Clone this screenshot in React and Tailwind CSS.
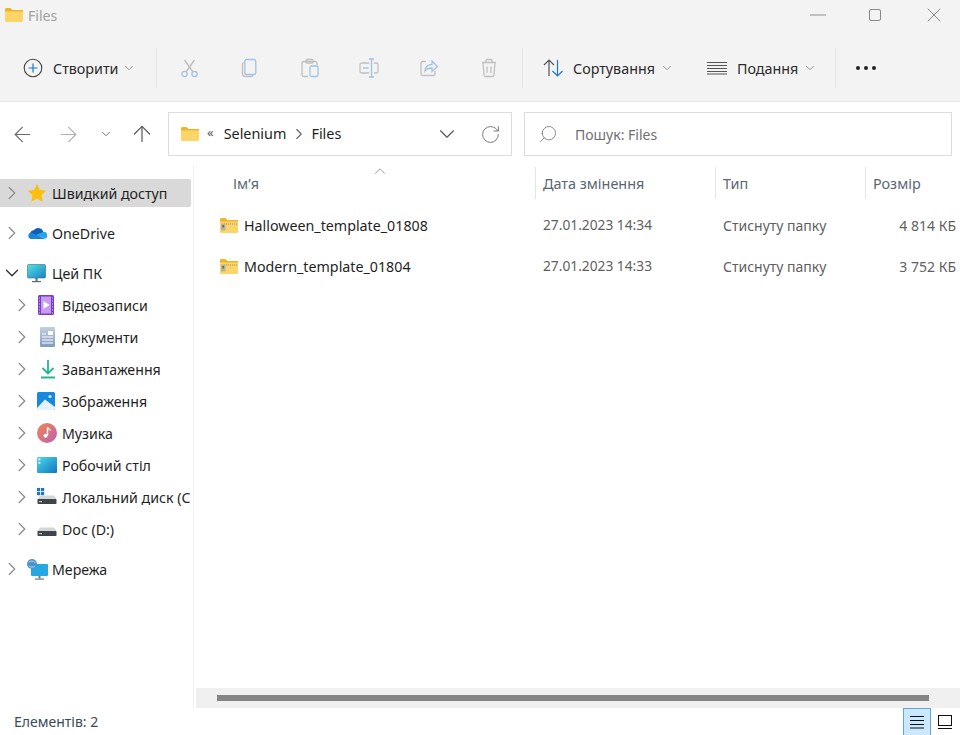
import { ChevronDown, ChevronRight, ChevronUp, ArrowLeft, ArrowRight, ArrowUp, RotateCw, Search, Minus, X } from 'lucide-react';

const Folder = ({ className }) => (
  <svg viewBox="0 0 18 14" className={className}>
    <path d="M0 1.5C0 .7.5 0 1.3 0h4.2l2 2H18v2H0z" fill="#f0b429" />
    <path d="M0 3.5h18v9.300c0 .7-.5 1.200-1.200 1.200H1.200C.5 14 0 13.500 0 12.800z" fill="#fbd568" />
  </svg>
);

const ZipFolder = () => (
  <svg viewBox="0 0 18 15" className="w-[18px] h-[15px] shrink-0">
    <path d="M0 1.500C0 .7.5 0 1.300 0h4.200l2 2H18v2H0z" fill="#f0b429" />
    <path d="M0 3.500h18v10.300c0 .7-.5 1.200-1.200 1.200H1.200C.5 15 0 14.500 0 13.800z" fill="#fbd568" />
    <path d="M4 6h14" stroke="#8d8a7a" strokeWidth="1.200" strokeDasharray="1 1" />
    <rect x="1" y="5.500" width="4.500" height="7" fill="#b9b49c" />
    <rect x="2.300" y="7" width="1.800" height="2.500" fill="#6d6a5a" />
  </svg>
);

const ToolIcon = ({ children }) => (
  <svg viewBox="0 0 20 20" fill="none" strokeWidth="1.300" className="w-5 h-5 shrink-0">{children}</svg>
);

const Sep = () => <div className="w-px h-10 bg-[#e4e4e4] shrink-0" />;

const Star = () => (
  <svg viewBox="0 0 20 20" className="w-5 h-5">
    <path d="M10 1l2.800 6 6.400.8-4.700 4.400 1.200 6.500L10 15.500l-5.700 3.200 1.200-6.500L.8 7.800 7.200 7z" fill="#fbbf0c" />
  </svg>
);
const Cloud = () => (
  <svg viewBox="0 0 20 14" className="w-5 h-[14px]">
    <path d="M7 4a5.500 5.500 0 0 1 9.500 2.500L8 10 3 7.500A5 5 0 0 1 7 4z" fill="#0f5fb5" />
    <path d="M16 6a3.500 3.500 0 0 1 2.500 6.500L9 9z" fill="#2aa3e6" />
    <path d="M3.500 6.500 L10 9l8.500 4H3.500A3.500 3.500 0 0 1 3.500 6.500z" fill="#1a84d8" />
  </svg>
);
const Monitor = () => (
  <svg viewBox="0 0 20 19" className="w-5 h-[19px]">
    <defs><linearGradient id="mon" x1="0" y1="0" x2="1" y2="1"><stop offset="0" stopColor="#56e0e0" /><stop offset="1" stopColor="#1583c9" /></linearGradient></defs>
    <rect x="0.500" y="0.500" width="18" height="13.500" rx="1" fill="url(#mon)" stroke="#3a6d80" strokeWidth=".6" />
    <rect x="8.500" y="14" width="2" height="3" fill="#5b6b75" />
    <rect x="5" y="17" width="9" height="1.200" fill="#5b6b75" />
  </svg>
);
const Film = () => (
  <svg viewBox="0 0 16 20" className="w-4 h-5 ml-px">
    <rect width="16" height="20" rx="1.500" fill="#7a3cc8" />
    <rect x="3" y="1.500" width="10" height="17" fill="#c79bf0" />
    <path d="M5.500 6l6 4-6 4z" fill="#fff" />
    <path d="M1 3h1M1 6h1M1 9h1M1 12h1M1 15h1M1 18h1M14 3h1M14 6h1M14 9h1M14 12h1M14 15h1M14 18h1" stroke="#e5d5f7" strokeWidth="1" />
  </svg>
);
const Doc = () => (
  <svg viewBox="0 0 15 20" className="w-[15px] h-5 ml-[3px]">
    <defs><linearGradient id="doc" x1="0" y1="0" x2="0" y2="1"><stop offset="0" stopColor="#c2d0e0" /><stop offset="1" stopColor="#7f9bbd" /></linearGradient></defs>
    <rect width="15" height="20" rx="1" fill="url(#doc)" />
    <path d="M2 7h4M2 10h11M2 13h11M2 16h11" stroke="#fff" strokeWidth="1" />
    <rect x="8" y="4" width="5" height="4" fill="#fff" />
  </svg>
);
const Download = () => (
  <svg viewBox="0 0 16 20" className="w-4 h-5 ml-[3px]" fill="none" stroke="#24b594" strokeWidth="1.800">
    <path d="M8 1v13M2.500 9L8 14.500 13.500 9" />
    <path d="M1 18.500h14" strokeWidth="2" />
  </svg>
);
const Picture = () => (
  <svg viewBox="0 0 18 18" className="w-[18px] h-[18px]">
    <rect width="18" height="18" rx="1.500" fill="#1688e0" />
    <path d="M0 16l8-8.500L18 15v1.500a1.500 1.500 0 0 1-1.500 1.500h-15A1.500 1.500 0 0 1 0 16z" fill="#e4f3fd" />
    <circle cx="13" cy="4.500" r="1.600" fill="#d0ebfc" />
  </svg>
);
const Music = () => (
  <svg viewBox="0 0 20 20" className="w-5 h-5">
    <defs><linearGradient id="mus" x1="0" y1="0" x2="1" y2="1"><stop offset="0" stopColor="#f0884f" /><stop offset="1" stopColor="#bd5fb5" /></linearGradient></defs>
    <circle cx="10" cy="10" r="10" fill="url(#mus)" />
    <path d="M10.500 4.500v8" stroke="#fff" strokeWidth="1.500" />
    <path d="M10.500 4.500c1 1.500 2.500 1.500 3 3" stroke="#fff" strokeWidth="1.200" fill="none" />
    <circle cx="8.500" cy="12.800" r="2" fill="#fff" />
  </svg>
);
const Desktop = () => (
  <svg viewBox="0 0 20 16" className="w-5 h-4">
    <defs><linearGradient id="dsk" x1="0" y1="0" x2="1" y2="1"><stop offset="0" stopColor="#4fd9e8" /><stop offset="1" stopColor="#0c76c4" /></linearGradient></defs>
    <rect width="20" height="16" rx="1" fill="url(#dsk)" />
    <rect x="1.500" y="1.500" width="1.800" height="1.800" fill="#fff" />
    <rect x="1.500" y="5" width="1.800" height="1.800" fill="#e6fbff" />
  </svg>
);
const Disk = ({ win }) => (
  <svg viewBox="0 0 20 18" className="w-5 h-[18px]">
    {win && (
      <g fill="#1a78c8">
        <rect x="0" y="0" width="3.200" height="3.200" />
        <rect x="4" y="0" width="3.200" height="3.200" />
        <rect x="0" y="4" width="3.200" height="3.200" />
        <rect x="4" y="4" width="3.200" height="3.200" />
      </g>
    )}
    <path d="M3 7.500h14l2.500 3.500H.5z" fill="#d6d6d6" />
    <rect x="0.500" y="11" width="19" height="5" rx=".8" fill="#3f4448" />
    <rect x="2" y="13" width="3" height="1.200" fill="#c8c8c8" />
  </svg>
);
const Network = () => (
  <svg viewBox="0 0 21 21" className="w-[21px] h-[21px]">
    <rect x="4" y="5" width="17" height="12" rx="1" fill="#25a8e0" />
    <rect x="11.500" y="17" width="2" height="2.500" fill="#6b7a85" />
    <rect x="8" y="19.500" width="9" height="1.200" fill="#6b7a85" />
    <circle cx="5" cy="5" r="5" fill="#4f92c9" />
    <path d="M1.500 3.500c2-2 5-2 7 .5M2 7c2 1.500 4 1.500 6 0" stroke="#c6e3f5" strokeWidth=".8" fill="none" />
  </svg>
);

const NavRow = ({ open, indent, icon, label, selected, className = '' }) => (
  <div className={'h-8 flex items-center ' + className}>
    <div className={'h-7 w-full flex items-center ' + (selected ? 'bg-[#d9d9d9] rounded-r-[2px]' : '')}>
      <div className={'flex items-center shrink-0 ' + (indent ? 'w-[37px] pl-[11px]' : 'w-[27px] pl-px')}>
        {open
          ? <ChevronDown size={22} strokeWidth={1.500} className="text-[#333]" />
          : <ChevronRight size={22} strokeWidth={1.300} className="text-[#8a8a8a]" />}
      </div>
      <div className="w-[25px] flex items-center justify-start shrink-0">{icon}</div>
      <span className="mt-[2px] whitespace-nowrap text-[#1f1f1f]">{label}</span>
    </div>
  </div>
);

const HeadCell = ({ className, children }) => (
  <div className={'h-8 pt-[2px] flex items-center text-[14.4px] text-[#5a6675] ' + className}>{children}</div>
);

const FileRow = ({ name, date, size }) => (
  <div className="h-[41px] flex items-center">
    <div className="w-[347px] pl-6 flex items-center gap-[6px] text-[14.25px] text-[#1f1f1f]">
      <ZipFolder />
      <span>{name}</span>
    </div>
    <div className="w-[180px] text-[13.75px] text-[#5f5f5f]">{date}</div>
    <div className="w-[150px] text-[#5f5f5f]">{type}</div>
    <div className="flex-1 pr-1 text-right text-[#5f5f5f]">{size}</div>
  </div>
);

const type = 'Стиснуту папку';

export default function App() {
  return (
    <div className="w-[960px] h-[735px] flex flex-col bg-white overflow-hidden text-[14px] font-['Noto_Sans','Open_Sans',sans-serif]">
      {/* title + toolbar */}
      <div className="bg-[#f3f3f3] border-b border-[#e6e6e6] h-[102px] shrink-0">
        <div className="h-[30px] flex items-center pl-[5px]">
          <Folder className="w-[18px] h-[14px]" />
          <span className="ml-[5px] text-[#a0a0a0]">Files</span>
          <div className="ml-auto flex items-center text-[#8a8a8a]">
            <Minus size={26} strokeWidth={0.900} className="mr-[38px]" />
            <div className="w-[12px] h-[12px] border border-[#8a8a8a] rounded-[2px] mr-[41px]" />
            <X size={24} strokeWidth={1} className="mr-[14px]" />
          </div>
        </div>
        <div className="h-[71px] pt-[5px] flex items-center text-[14.3px] text-[#2b2b2b]">
          <div className="w-[156px] flex items-center pl-[23px] shrink-0">
            <svg viewBox="0 0 20 20" className="w-5 h-5 shrink-0" fill="none">
              <circle cx="10" cy="10" r="8.800" stroke="#444" strokeWidth="1.100" />
              <path d="M10 5.500v9M5.500 10h9" stroke="#1a78c8" strokeWidth="1.200" />
            </svg>
            <span className="ml-[10px] mt-px">Створити</span>
            <ChevronDown size={14} strokeWidth={1.300} className="ml-1 text-[#777]" />
          </div>
          <Sep />
          <div className="w-[365px] flex items-center justify-between pl-[23px] pr-[23px] shrink-0">
            <ToolIcon>
              <circle cx="4.500" cy="16" r="2.600" stroke="#a0c4e4" />
              <circle cx="14.500" cy="16" r="2.600" stroke="#a0c4e4" />
              <path d="M6 14L14.500 2M13 14L4.500 2" stroke="#bcbcbc" />
            </ToolIcon>
            <ToolIcon>
              <path d="M4 4.500c-1 .3-1.500 1-1.500 2v9c0 2 1 3 3 3h6c1 0 1.500-.4 1.800-1.200" stroke="#c0c0c0" />
              <rect x="4.800" y="1.500" width="11" height="15" rx="2" stroke="#a0c4e4" />
            </ToolIcon>
            <ToolIcon>
              <path d="M8 18.500H4c-1.300 0-2-.7-2-2v-11c0-1.300.7-2 2-2h11c1.300 0 2 .7 2 2v1.500" stroke="#c0c0c0" />
              <rect x="6" y="1.500" width="7" height="3.500" rx="1" stroke="#c0c0c0" />
              <rect x="10" y="8" width="8" height="10.500" rx="1.500" stroke="#a0c4e4" />
            </ToolIcon>
            <ToolIcon>
              <path d="M10 5H2.500c-1 0-1.500.5-1.500 1.500v7c0 1 .5 1.500 1.500 1.500H10M15 5h2.500c1 0 1.500.5 1.500 1.500v7c0 1-.5 1.500-1.500 1.500H15" stroke="#c0c0c0" />
              <path d="M10 1h5M12.500 1v18M10 19h5M4 10h5.500" stroke="#a0c4e4" strokeWidth="1.400" />
            </ToolIcon>
            <ToolIcon>
              <path d="M7 3.500H3.500c-1 0-1.500.5-1.500 1.500v11c0 1 .5 1.500 1.500 1.500h11c1 0 1.500-.5 1.500-1.500v-3" stroke="#c0c0c0" />
              <path d="M6 13c0-4.500 3-6.500 7-6.500V3l5.500 5.500L13 13.500V10c-3 0-5.500.5-7 3z" stroke="#a0c4e4" />
            </ToolIcon>
            <ToolIcon>
              <path d="M3 4.500h14M7 4V2.500c0-.6.4-1 1-1h4c.6 0 1 .4 1 1V4M4 4.500l1 12.500c.1 1 .7 1.500 1.500 1.500h7c.8 0 1.400-.5 1.500-1.500l1-12.500M8 8.500v6.500M12 8.500v6.500" stroke="#c0c0c0" />
            </ToolIcon>
          </div>
          <Sep />
          <div className="w-[184px] flex items-center pl-5 shrink-0">
            <svg viewBox="0 0 21 20" className="w-[21px] h-5 shrink-0" fill="none" strokeWidth="1.200">
              <path d="M6 18V2M1 7l5-5 5 5" stroke="#555" />
              <path d="M14.500 2v16M9.500 13l5 5 5-5" stroke="#1a78c8" />
            </svg>
            <span className="ml-[9px] mt-px">Сортування</span>
            <ChevronDown size={14} strokeWidth={1.300} className="ml-[5px] text-[#777]" />
          </div>
          <div className="w-[128px] flex items-center shrink-0">
            <svg viewBox="0 0 20 14" className="w-5 h-[14px] shrink-0" fill="none" stroke="#555" strokeWidth="1">
              <path d="M0 1.500h20M0 4.500h20M0 7.500h20M0 10.500h20M0 13h20" />
            </svg>
            <span className="ml-[10px] mt-px">Подання</span>
            <ChevronDown size={14} strokeWidth={1.300} className="ml-[5px] text-[#777]" />
          </div>
          <Sep />
          <div className="ml-5 flex items-center gap-1">
            <div className="w-[4px] h-[4px] rounded-full bg-[#222]" />
            <div className="w-[4px] h-[4px] rounded-full bg-[#222]" />
            <div className="w-[4px] h-[4px] rounded-full bg-[#222]" />
          </div>
        </div>
      </div>

      {/* nav */}
      <div className="h-[63px] shrink-0 flex items-start pt-[10px]">
        <div className="w-[168px] h-11 flex items-center pl-[10px] shrink-0">
          <ArrowLeft size={25} strokeWidth={1.050} className="text-[#6a6a6a]" />
          <ArrowRight size={25} strokeWidth={1.050} className="ml-[21px] text-[#b0b0b0]" />
          <ChevronDown size={14} strokeWidth={1.500} className="ml-[18px] text-[#666]" />
          <ArrowUp size={26} strokeWidth={1.100} className="ml-4 text-[#555]" />
        </div>
        <div className="w-[344px] h-11 border border-[#dcdcdc] flex items-center pl-3 pr-[10px] shrink-0 text-[14.4px]">
          <Folder className="w-[18px] h-[14px]" />
          <span className="ml-[8px] text-[#555] text-[13px] leading-none -mt-1">«</span>
          <span className="ml-[10px] text-[#1f1f1f]">Selenium</span>
          <ChevronRight size={18} strokeWidth={1.500} className="ml-1 mr-[3px] text-[#666]" />
          <span className="text-[#1f1f1f]">Files</span>
          <ChevronDown size={26} strokeWidth={1} className="ml-auto text-[#555]" />
          <RotateCw size={21} strokeWidth={1} className="ml-5 text-[#666]" />
        </div>
        <div className="w-[428px] ml-[12px] h-11 border border-[#dcdcdc] flex items-center pl-[13px] shrink-0 text-[#6f6f6f]">
          <Search size={20} strokeWidth={1} className="-scale-x-100 text-[#777]" />
          <span className="ml-[17px]">Пошук: Files</span>
        </div>
      </div>

      {/* body */}
      <div className="flex-1 min-h-0 flex">
        <div className="w-[194px] shrink-0 border-r border-[#f2f2f2] pt-[12px] pr-[2px] overflow-hidden text-[14.2px]">
          <NavRow icon={<Star />} label="Швидкий доступ" selected />
          <NavRow className="mt-2" icon={<Cloud />} label="OneDrive" />
          <NavRow className="mt-2" open icon={<Monitor />} label="Цей ПК" />
          <NavRow indent icon={<Film />} label="Відеозаписи" />
          <NavRow indent icon={<Doc />} label="Документи" />
          <NavRow indent icon={<Download />} label="Завантаження" />
          <NavRow indent icon={<Picture />} label="Зображення" />
          <NavRow indent icon={<Music />} label="Музика" />
          <NavRow indent icon={<Desktop />} label="Робочий стіл" />
          <NavRow indent icon={<Disk win />} label="Локальний диск (C" />
          <NavRow indent icon={<Disk />} label="Doc (D:)" />
          <NavRow className="mt-2" icon={<Network />} label="Мережа" />
        </div>

        <div className="flex-1 min-w-0 flex flex-col pl-[2px] pt-[2px]">
          <div className="flex relative">
            <HeadCell className="w-[340px] pl-[37px] border-r border-[#e5e5e5]">Ім’я</HeadCell>
            <ChevronUp size={18} strokeWidth={1} className="absolute left-[175px] -top-[5px] text-[#777]" />
            <HeadCell className="w-[180px] pl-[7px] border-r border-[#e5e5e5]">Дата змінення</HeadCell>
            <HeadCell className="w-[150px] pl-[7px] border-r border-[#e5e5e5]">Тип</HeadCell>
            <HeadCell className="flex-1 pl-[7px]">Розмір</HeadCell>
          </div>
          <div className="mt-[6px]">
            <FileRow name="Halloween_template_01808" date="27.01.2023 14:34" size="4 814 КБ" />
            <FileRow name="Modern_template_01804" date="27.01.2023 14:33" size="3 752 КБ" />
          </div>
          <div className="mt-auto h-5 bg-[#f0f0f0] flex items-center pl-[21px]">
            <div className="w-[712px] h-[6px] bg-[#858585]" />
          </div>
        </div>
      </div>

      {/* status */}
      <div className="h-[27px] shrink-0 flex items-center pl-[14px] text-[#3c4a5a]">
        <span>Елементів: 2</span>
        <div className="ml-auto flex items-start h-full mr-[5px]">
          <div className="w-[28px] h-[27px] bg-[#cce8ff] border border-b-0 border-[#5fa9d6] flex items-center justify-center">
            <svg viewBox="0 0 16 14" className="w-4 h-[14px]" fill="none" stroke="#111" strokeWidth="1">
              <path d="M1 1.500h14M1 5.500h14M1 9.500h14M1 13h14" />
            </svg>
          </div>
          <div className="w-[20px] h-[27px] ml-[4px] flex items-center justify-center">
            <svg viewBox="0 0 16 16" className="w-4 h-4" fill="none" stroke="#111" strokeWidth="1">
              <rect x="1.500" y="1.500" width="13" height="10" />
              <path d="M1 14.500h14" />
            </svg>
          </div>
        </div>
      </div>
    </div>
  );
}
